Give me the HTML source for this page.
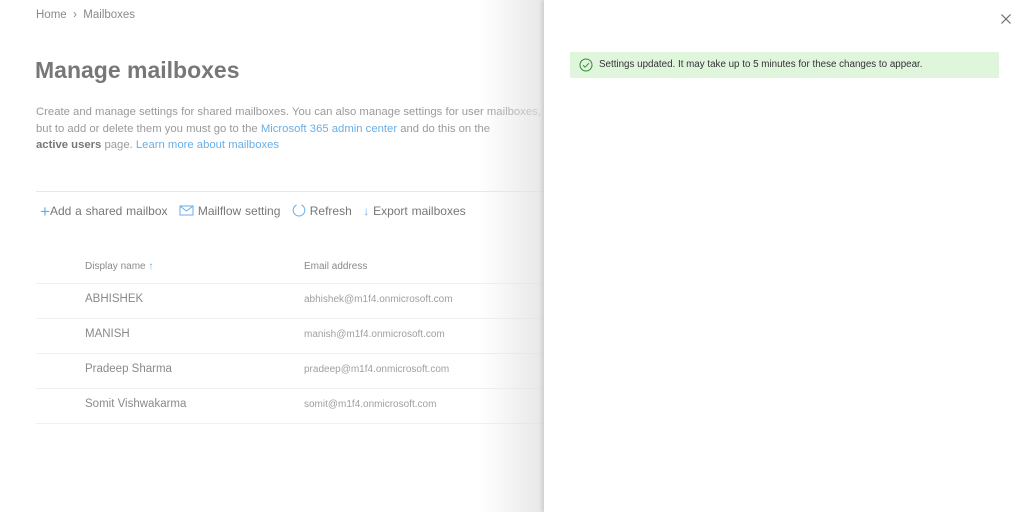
<!DOCTYPE html>
<html><head><style>
body{margin:0;width:1024px;height:512px;overflow:hidden;background:#fff;font-family:"Liberation Sans",sans-serif;position:relative}
.a{position:absolute;white-space:nowrap}
.g{color:#8a8a8a}
.l{color:#6aaee6}
.line{position:absolute;left:36px;width:508px;height:1px;background:#f0f0f0}
</style></head><body>
<div class="a g" style="left:36px;top:9px;font-size:11.5px">Home &nbsp;›&nbsp; Mailboxes</div>
<div class="a" style="left:35px;top:57px;font-size:23px;font-weight:bold;color:#777">Manage mailboxes</div>
<div class="a" style="left:36px;top:104px;font-size:11.3px;line-height:16.5px;color:#9a9a9a">Create and manage settings for shared mailboxes. You can also manage settings for user mailboxes,<br>but to add or delete them you must go to the <span class="l">Microsoft 365 admin center</span> and do this on the<br><b style="color:#777">active users</b> page. <span class="l">Learn more about mailboxes</span></div>
<div class="line" style="top:191px;background:#e8e8e8"></div>
<div class="a" style="left:40px;top:202px;font-size:12px;color:#777;word-spacing:0.5px">
<span class="l" style="font-size:17px;vertical-align:-2px">+</span>Add a shared mailbox &nbsp;
<svg width="15" height="11" viewBox="0 0 15 11" style="vertical-align:-1px"><path d="M1 1h13v9H1z M1 1l6.5 5L14 1" fill="none" stroke="#6aaee6"/></svg> Mailflow setting &nbsp;
<svg width="14" height="14" viewBox="0 0 14 14" style="vertical-align:-2px"><path d="M9.5 2A5.8 5.8 0 1 1 4.5 2" fill="none" stroke="#6aaee6"/></svg> Refresh &nbsp;
<span class="l">↓</span> Export mailboxes</div>
<div class="a g" style="left:85px;top:261px;font-size:10px">Display name <span class="l">↑</span></div>
<div class="a g" style="left:304px;top:261px;font-size:10px">Email address</div>
<div class="line" style="top:283px"></div>
<div class="line" style="top:318px"></div>
<div class="line" style="top:353px"></div>
<div class="line" style="top:388px"></div>
<div class="line" style="top:423px"></div>
<div class="a g" style="left:85px;top:293px;font-size:11.5px">ABHISHEK</div>
<div class="a g" style="left:85px;top:328px;font-size:11.5px">MANISH</div>
<div class="a g" style="left:85px;top:363px;font-size:11.5px">Pradeep Sharma</div>
<div class="a g" style="left:85px;top:398px;font-size:11.5px">Somit Vishwakarma</div>
<div class="a" style="left:304px;top:294px;font-size:10px;color:#a0a0a0">abhishek@m1f4.onmicrosoft.com</div>
<div class="a" style="left:304px;top:329px;font-size:10px;color:#a0a0a0">manish@m1f4.onmicrosoft.com</div>
<div class="a" style="left:304px;top:364px;font-size:10px;color:#a0a0a0">pradeep@m1f4.onmicrosoft.com</div>
<div class="a" style="left:304px;top:399px;font-size:10px;color:#a0a0a0">somit@m1f4.onmicrosoft.com</div>
<div style="position:absolute;left:480px;top:0;width:64px;height:512px;background:linear-gradient(to right,rgba(255,255,255,0),rgba(225,225,225,0.8))"></div>
<div style="position:absolute;left:544px;top:0;width:480px;height:512px;background:#fff;box-shadow:-2px 0 4px rgba(0,0,0,0.12)"></div>
<svg class="a" style="left:1001px;top:14px" width="10" height="10" viewBox="0 0 10 10"><path d="M0.5 0.5l9 9M9.5 0.5l-9 9" stroke="#666" stroke-width="1.1"/></svg>
<div style="position:absolute;left:570px;top:52px;width:429px;height:26px;background:#dff6dd"></div>
<svg class="a" style="left:579px;top:58px" width="14" height="14" viewBox="0 0 14 14"><circle cx="7" cy="7" r="6" fill="none" stroke="#2f8a2f"/><path d="M4 7.2l2 2 4-4" fill="none" stroke="#2f8a2f"/></svg>
<div class="a" style="left:599px;top:59px;font-size:9.8px;color:#333">Settings updated. It may take up to 5 minutes for these changes to appear.</div>
</body></html>
